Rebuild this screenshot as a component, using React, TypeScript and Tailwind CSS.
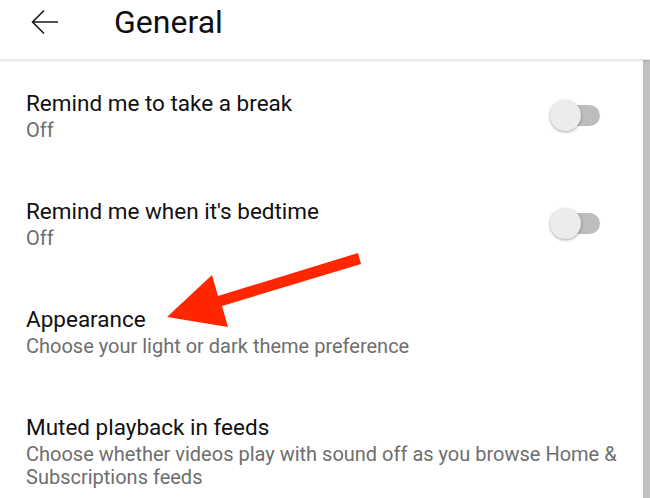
import React from "react";

function Toggle() {
  return (
    <div className="relative w-[50px] h-[32px] flex items-center mr-[43px]">
      <div className="absolute left-[6px] right-0 h-[21px] rounded-full bg-[#bdbdbd]" />
      <div className="absolute left-0 w-[31px] h-[31px] rounded-full bg-[#ececec] shadow-[0_1px_3px_rgba(0,0,0,0.35)]" />
    </div>
  );
}

function Item({
  title,
  sub,
  toggle,
}: {
  title: string;
  sub: React.ReactNode;
  toggle?: boolean;
}) {
  return (
    <div className="flex items-center pl-[26px] pt-[28px] pb-[26px]">
      <div className="flex-1 min-w-0">
        <div className="text-[22.5px] leading-[30px] text-[#111111]">{title}</div>
        <div className="text-[20px] leading-[23px] text-[#6e6e6e] mt-px">{sub}</div>
      </div>
      {toggle && <Toggle />}
    </div>
  );
}

export default function App() {
  return (
    <div
      className="relative w-[650px] h-[498px] overflow-hidden bg-white flex flex-col"
      style={{ fontFamily: "Roboto, 'Noto Sans', sans-serif" }}
    >
      <header className="relative z-10 h-[60px] flex items-center shrink-0 bg-white shadow-[0_1px_3px_rgba(0,0,0,0.12)] border-b border-[#e6e6e6]">
        <svg
          className="ml-[31px] mt-[-16px]"
          width="28"
          height="26"
          viewBox="0 0 28 26"
          fill="none"
          stroke="#1a1a1a"
          strokeWidth="1.6"
        >
          <path d="M27 13H2M13 1.5L1.5 13 13 24.5" />
        </svg>
        <div className="ml-[55px] mt-[-16px] text-[32px] leading-none text-[#0f0f0f]">
          General
        </div>
      </header>
      <div className="flex flex-1 min-h-0">
        <div className="flex-1 min-w-0">
          <Item title="Remind me to take a break" sub="Off" toggle />
          <Item title="Remind me when it's bedtime" sub="Off" toggle />
          <Item title="Appearance" sub="Choose your light or dark theme preference" />
          <Item
            title="Muted playback in feeds"
            sub={
              <>
                Choose whether videos play with sound off as you browse Home &amp;
                <br />
                Subscriptions feeds
              </>
            }
          />
        </div>
        <div className="w-[7px] bg-[#c2c2c2] shrink-0" />
      </div>
      <svg
        className="absolute left-0 top-0 pointer-events-none"
        width="650"
        height="498"
      >
        <polygon
          points="167,317 212,275 218,296 358,253 361,264 222,306 228,327"
          fill="#ff2600"
        />
      </svg>
    </div>
  );
}
